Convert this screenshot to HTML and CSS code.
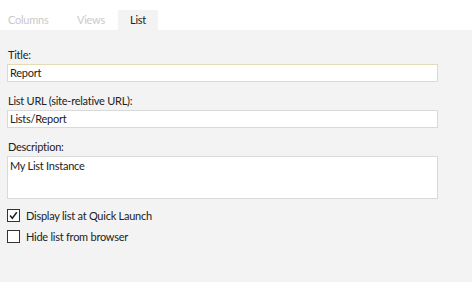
FILE: index.html
```html
<!DOCTYPE html>
<html>
<head>
<meta charset="utf-8">
<link rel="stylesheet" href="styles.css">
</head>
<body>
<div class="window">
  <div class="tabs">
    <div class="tab">Columns</div>
    <div class="tab">Views</div>
    <div class="tab active">List</div>
  </div>
  <div class="panel">
    <div class="label">Title:</div>
    <div class="field focus">Report</div>
    <div class="label">List URL (site-relative URL):</div>
    <div class="field">Lists/Report</div>
    <div class="label">Description:</div>
    <div class="field area">My List Instance</div>
    <div class="checks">
      <div class="check"><span class="box checked"><svg width="11" height="11" viewBox="0 0 11 11"><path d="M2 5.6 L4.3 8.2 L8.8 2.2" fill="none" stroke="#222" stroke-width="1.5"/></svg></span>Display list at Quick Launch</div>
      <div class="check"><span class="box"></span>Hide list from browser</div>
    </div>
  </div>
</div>
</body>
</html>
```
FILE: styles.css
```css
html, body {
  margin: 0;
  padding: 0;
  background: #ffffff;
}
body {
  font-family: Lato, "Noto Sans", sans-serif;
  font-size: 11px;
  letter-spacing: -0.25px;
  color: #222;
}
.window {
  width: 472px;
  height: 282px;
  display: flex;
  flex-direction: column;
}
.tabs {
  display: flex;
  height: 30px;
  align-items: flex-end;
  padding-left: 8px;
  box-sizing: border-box;
}
.tab {
  height: 20px;
  line-height: 19px;
  color: #c9c9c9;
}
.tab:nth-child(1) { width: 69px; }
.tab:nth-child(2) { width: 41px; }
.tab.active {
  background: #f3f3f3;
  color: #222;
  width: 40px;
  text-align: center;
}
.panel {
  flex: 1;
  background: #f3f3f3;
  padding: 16px 0 0 7px;
  display: flex;
  flex-direction: column;
}
.label {
  padding-left: 1px;
  height: 18px;
  line-height: 17px;
}
.field {
  width: 431px;
  height: 18px;
  box-sizing: border-box;
  background: #fff;
  border: 1px solid #d9d9d9;
  line-height: 15px;
  padding-left: 2px;
  margin-bottom: 10px;
}
.field.focus {
  border-color: #e3dbb6;
}
.field.area {
  height: 43px;
  padding-top: 1px;
}
.checks {
  display: flex;
  flex-direction: column;
  gap: 8px;
}
.check {
  display: flex;
  align-items: center;
  height: 13px;
  line-height: 13px;
}
.box {
  width: 13px;
  height: 13px;
  box-sizing: border-box;
  border: 1px solid #333;
  background: #fff;
  margin-right: 6px;
  display: flex;
  align-items: center;
  justify-content: center;
}
```
